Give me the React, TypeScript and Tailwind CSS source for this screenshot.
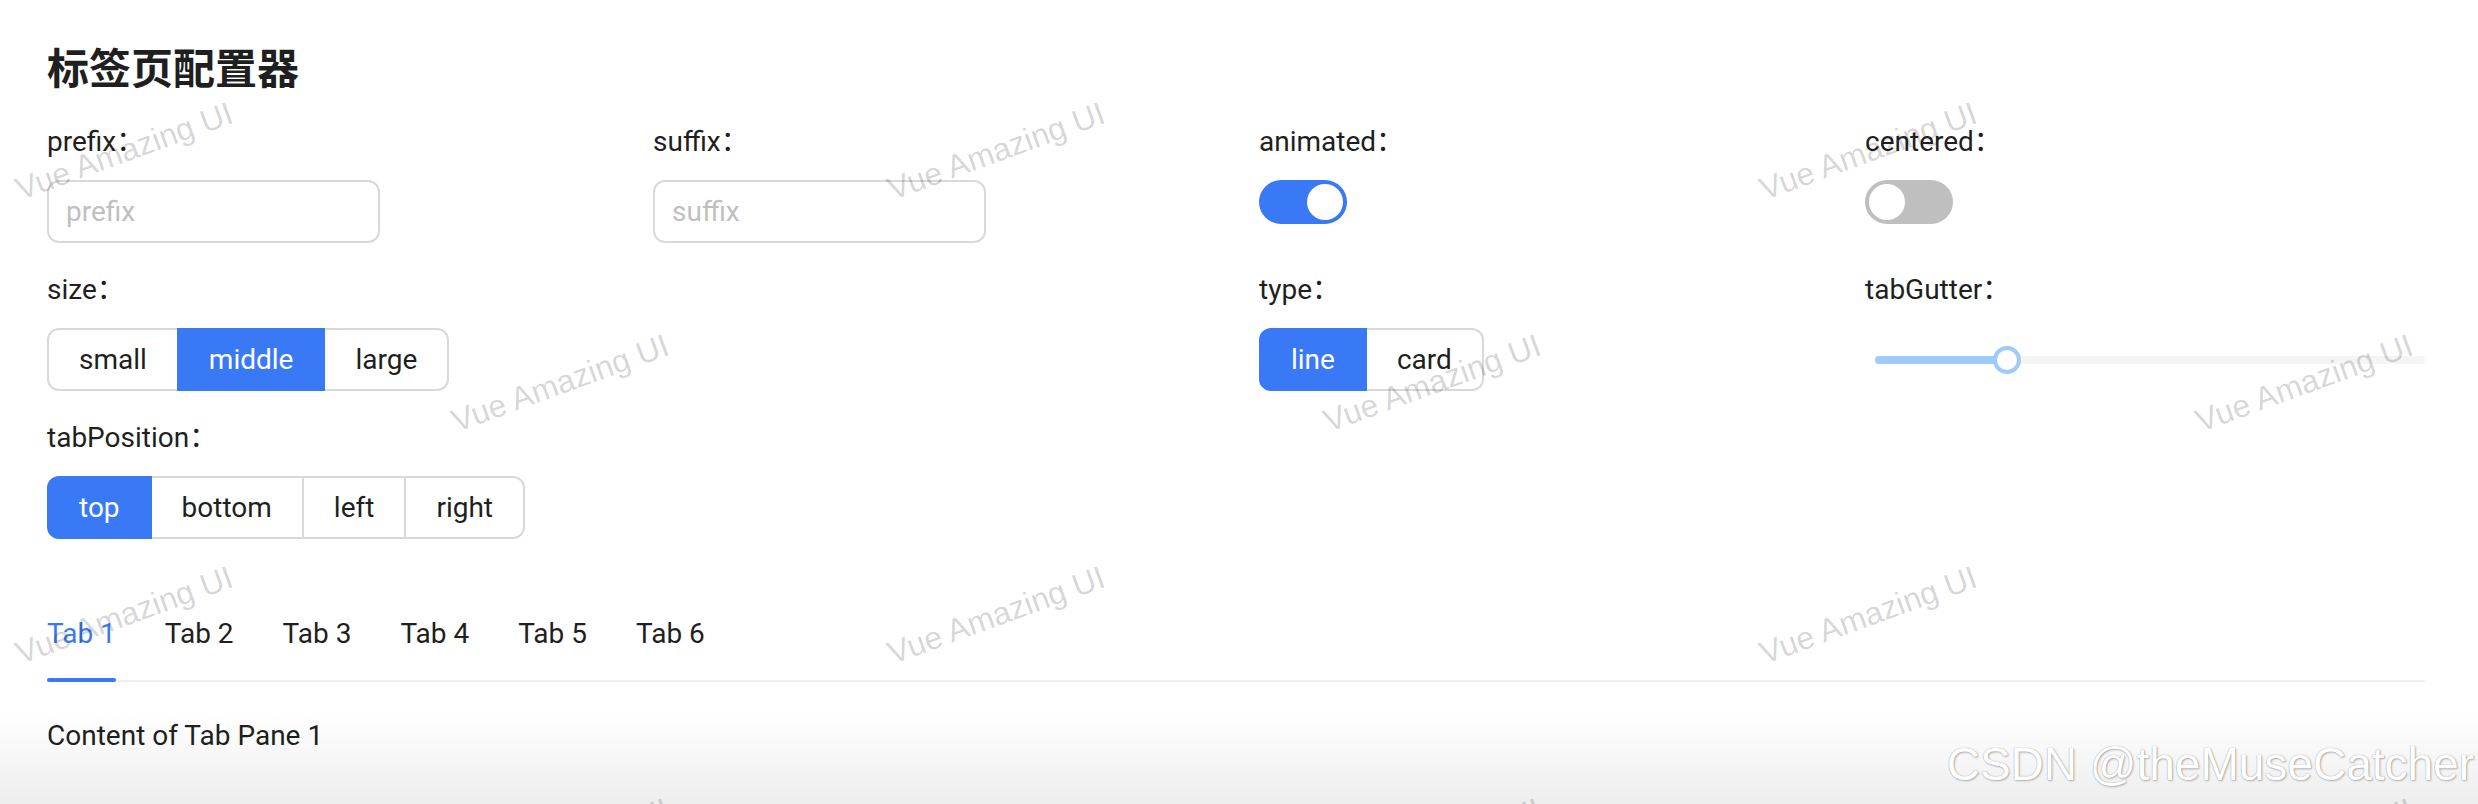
import React from "react";
import clsx from "clsx";

// marks laid over the page: [centerX, centerY]
const marks: [number, number][] = [];
[151, 383, 615, 847].forEach((y, row) => {
  const start = row % 2 === 0 ? 124 : 560;
  for (let x = start; x < 2700; x += 872) marks.push([x, y]);
});

const Field = ({ label, children, center }: { label: string; children: React.ReactNode; center?: boolean }) => (
  <div className="flex flex-col gap-[16px]">
    <div className="h-[44px] leading-[44px] whitespace-nowrap">{label}：</div>
    <div className={clsx("h-[63px] flex", center ? "items-center" : "items-start")}>{children}</div>
  </div>
);

const TextInput = ({ placeholder }: { placeholder: string }) => (
  <input
    readOnly
    placeholder={placeholder}
    className="w-[333px] h-[63px] rounded-[12px] border-2 border-[#d9d9d9] bg-white pl-[17px] pr-[17px] text-[28px] outline-none placeholder:text-[#bfbfbf]"
  />
);

const Toggle = ({ on }: { on: boolean }) => (
  <div
    className={clsx(
      "flex w-[88px] h-[44px] rounded-full p-[4px]",
      on ? "bg-[#3a79f5] justify-end" : "bg-[#bfbfbf] justify-start"
    )}
  >
    <div className="w-[36px] h-[36px] rounded-full bg-white" />
  </div>
);

const Segmented = ({ items, value }: { items: string[]; value: string }) => (
  <div className="flex h-[63px]">
    {items.map((item, i) => {
      const active = item === value;
      return (
        <div
          key={item}
          className={clsx(
            "flex items-center px-[30px] border-y-2 border-r-2 leading-none",
            i === 0 && "border-l-2 rounded-l-[12px]",
            i === items.length - 1 && "rounded-r-[12px]",
            active && i > 0 && "-ml-[2px] border-l-2",
            active ? "relative bg-[#3a79f5] border-[#3a79f5] text-white" : "bg-white border-[#d9d9d9]"
          )}
        >
          {item}
        </div>
      );
    })}
  </div>
);

const GutterSlider = () => (
  <div className="relative ml-[10px] w-[556px] h-[28px] flex items-center">
    <div className="w-full h-[8px] rounded-full bg-[#f5f5f5]">
      <div className="w-[132px] h-full rounded-full bg-[#9ecbfa]" />
    </div>
    <div className="absolute left-[118px] top-0 w-[28px] h-[28px] rounded-full border-4 border-[#9ecbfa] bg-white" />
  </div>
);

export default function App() {
  const tabs = ["Tab 1", "Tab 2", "Tab 3", "Tab 4", "Tab 5", "Tab 6"];

  return (
    <div className="relative w-[2478px] h-[804px] overflow-hidden bg-white text-[28px] text-[#1f1f1f] font-['Roboto','Noto_Sans_CJK_SC',sans-serif]">
      <div className="pl-[47px] pt-[45px]">
        <h2 className="text-[42px] leading-none font-bold font-['Noto_Sans_CJK_SC',sans-serif]">标签页配置器</h2>

        <div className="mt-[33px] w-[2378px] grid grid-cols-4 gap-x-[46px] gap-y-[25px]">
          <Field label="prefix">
            <TextInput placeholder="prefix" />
          </Field>
          <Field label="suffix">
            <TextInput placeholder="suffix" />
          </Field>
          <Field label="animated">
            <Toggle on />
          </Field>
          <Field label="centered">
            <Toggle on={false} />
          </Field>

          <Field label="size">
            <Segmented items={["small", "middle", "large"]} value="middle" />
          </Field>
          <div />
          <Field label="type">
            <Segmented items={["line", "card"]} value="line" />
          </Field>
          <Field label="tabGutter" center>
            <GutterSlider />
          </Field>

          <Field label="tabPosition">
            <Segmented items={["top", "bottom", "left", "right"]} value="top" />
          </Field>
        </div>

        <div className="mt-[49px] w-[2378px] flex gap-[49px] border-b-2 border-[#f0f0f0]">
          {tabs.map((tab, i) => (
            <div key={tab} className={clsx("relative py-[24px] leading-[44px]", i === 0 && "text-[#3a79f5]")}>
              {tab}
              {i === 0 && <div className="absolute left-0 right-0 -bottom-[2px] h-[4px] rounded-full bg-[#3a79f5]" />}
            </div>
          ))}
        </div>
        <div className="mt-[32px] leading-[44px]">Content of Tab Pane 1</div>
      </div>

      {/* watermark layer */}
      <div className="pointer-events-none absolute inset-0">
        {marks.map(([x, y]) => (
          <span
            key={`${x}-${y}`}
            className="absolute -translate-x-1/2 -translate-y-1/2 rotate-[-20deg] whitespace-nowrap text-[32px] leading-none text-black/[0.17] font-['Liberation_Sans',sans-serif]"
            style={{ left: x, top: y }}
          >
            Vue Amazing UI
          </span>
        ))}
      </div>

      <div className="pointer-events-none absolute inset-x-0 bottom-0 h-[90px] bg-linear-to-b from-transparent to-black/[0.07]" />
      <div className="pointer-events-none absolute right-[4px] top-[741px] text-[46px] leading-none text-white font-['Liberation_Sans',sans-serif] [text-shadow:0_0_1px_#8c8c8c,1px_1px_2px_#b4b4b4]">
        CSDN @theMuseCatcher
      </div>
    </div>
  );
}
